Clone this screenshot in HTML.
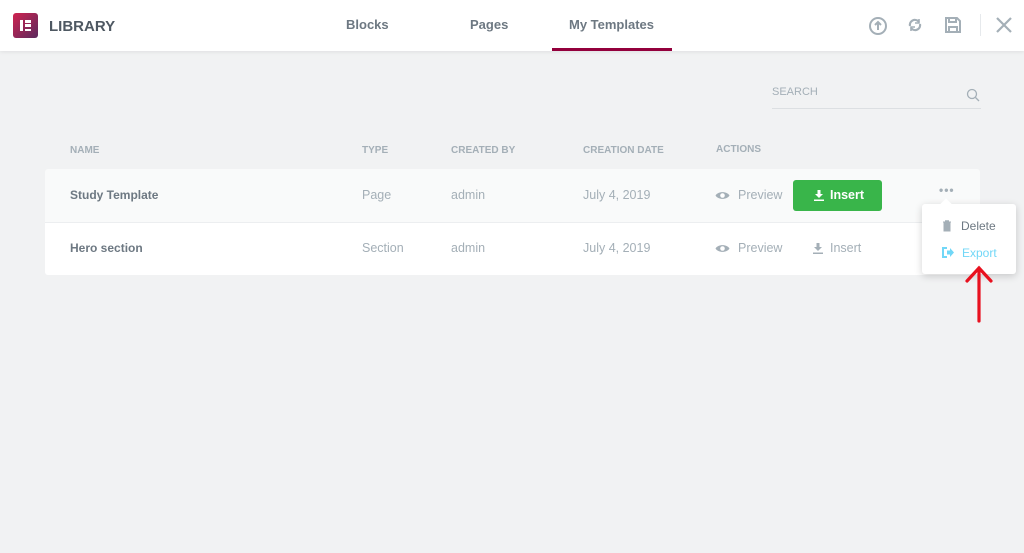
<!DOCTYPE html>
<html><head><style>
body{margin:0;width:1024px;height:553px;background:#f1f2f3;font-family:"Liberation Sans",sans-serif;position:relative;overflow:hidden}
.hdr{position:absolute;left:0;top:0;width:1024px;height:51px;background:#fff;box-shadow:0 1px 4px rgba(0,0,0,.08)}
.abs{position:absolute}
.tab{position:absolute;top:17px;font-size:13px;color:#6d7882;font-weight:bold}
.th{position:absolute;top:145px;font-size:10px;color:#a4afb7;font-weight:bold}
.c{position:absolute;font-size:12.5px;color:#a4afb7}
.n{position:absolute;font-size:12px;color:#6d7882;font-weight:bold}
</style></head><body>
<div class="hdr">
 <div class="abs" style="left:13px;top:13px;width:25px;height:25px;border-radius:3px;background:linear-gradient(135deg,#d0224f,#5a2a5e)"></div>
 <div class="abs" style="left:20px;top:20px;width:3px;height:11px;background:#fff"></div>
 <div class="abs" style="left:25px;top:20px;width:6px;height:2.5px;background:#fff"></div>
 <div class="abs" style="left:25px;top:24.3px;width:6px;height:2.5px;background:#fff"></div>
 <div class="abs" style="left:25px;top:28.5px;width:6px;height:2.5px;background:#fff"></div>
 <div class="abs" style="left:49px;top:18px;font-size:15px;font-weight:bold;color:#4e5862">LIBRARY</div>
 <div class="tab" style="left:346px">Blocks</div>
 <div class="tab" style="left:470px">Pages</div>
 <div class="tab" style="left:569px">My Templates</div>
 <div class="abs" style="left:552px;top:48px;width:120px;height:3px;background:#93003c"></div>
 <svg class="abs" style="left:866px;top:14px" width="24" height="24" viewBox="0 0 24 24" fill="none" stroke="#a4afb7" stroke-width="2"><circle cx="12" cy="12" r="8"/><path d="M12 16V8M9 11l3-3 3 3"/></svg>
 <svg class="abs" style="left:905px;top:15px" width="20" height="20" viewBox="0 0 20 20" fill="none" stroke="#a4afb7" stroke-width="2.2"><path d="M5 11a5 5 0 0 1 8-5l1 1M15 9a5 5 0 0 1-8 5l-1-1"/><path d="M14 4v4h-4M6 16v-4h4" stroke-width="1.6"/></svg>
 <svg class="abs" style="left:943px;top:15px" width="20" height="20" viewBox="0 0 20 20" fill="none" stroke="#a4afb7" stroke-width="2"><path d="M3 3h11l3 3v11H3z"/><path d="M6 3v4h7V3M6 17v-5h8v5"/></svg>
 <div class="abs" style="left:980px;top:14px;width:1px;height:22px;background:#e6e9ec"></div>
 <svg class="abs" style="left:994px;top:15px" width="20" height="20" viewBox="0 0 20 20" stroke="#a4afb7" stroke-width="2.2"><path d="M3 3l14 14M17 3L3 17"/></svg>
</div>
<div class="abs" style="left:772px;top:86px;font-size:11px;color:#a4afb7">SEARCH</div>
<svg class="abs" style="left:966px;top:88px" width="14" height="14" viewBox="0 0 14 14" fill="none" stroke="#a4afb7" stroke-width="1.3"><circle cx="6" cy="6" r="4.5"/><path d="M9.5 9.5L13 13"/></svg>
<div class="abs" style="left:772px;top:108px;width:209px;height:1px;background:#dcdfe2"></div>
<div class="th" style="left:70px">NAME</div>
<div class="th" style="left:362px">TYPE</div>
<div class="th" style="left:451px">CREATED BY</div>
<div class="th" style="left:583px">CREATION DATE</div>
<div class="th" style="left:716px;top:144px">ACTIONS</div>
<div class="abs" style="left:45px;top:169px;width:935px;height:53px;background:#f9fafa;border-radius:3px 3px 0 0"></div>
<div class="abs" style="left:45px;top:222px;width:935px;height:52px;background:#fff;border-top:1px solid #eceef0;border-radius:0 0 3px 3px"></div>
<div class="n" style="left:70px;top:188px">Study Template</div>
<div class="c" style="left:362px;top:188px">Page</div>
<div class="c" style="left:451px;top:188px">admin</div>
<div class="c" style="left:583px;top:188px">July 4, 2019</div>
<svg class="abs" style="left:715px;top:190px" width="15" height="11" viewBox="0 0 15 11"><path d="M0.5 5.5C3 1 12 1 14.5 5.5 12 10 3 10 0.5 5.5z" fill="#a4afb7"/><circle cx="7.5" cy="5.5" r="2.3" fill="#fff"/></svg>
<div class="c" style="left:738px;top:188px">Preview</div>
<div class="abs" style="left:793px;top:180px;width:89px;height:31px;background:#39b54a;border-radius:3px;color:#fff;font-size:12.5px;font-weight:bold;line-height:31px">
 <svg class="abs" style="left:21px;top:10px" width="10" height="11" viewBox="0 0 10 11"><path d="M3.5 0h3v4h2.5L5 8 1 4h2.5zM0 9.5h10V11H0z" fill="#fff"/></svg>
 <span style="position:absolute;left:37px">Insert</span></div>
<div class="abs" style="left:939px;top:183px;font-size:12px;color:#a4afb7;letter-spacing:1px;font-weight:bold">•••</div>
<div class="n" style="left:70px;top:241px">Hero section</div>
<div class="c" style="left:362px;top:241px">Section</div>
<div class="c" style="left:451px;top:241px">admin</div>
<div class="c" style="left:583px;top:241px">July 4, 2019</div>
<svg class="abs" style="left:715px;top:243px" width="15" height="11" viewBox="0 0 15 11"><path d="M0.5 5.5C3 1 12 1 14.5 5.5 12 10 3 10 0.5 5.5z" fill="#a4afb7"/><circle cx="7.5" cy="5.5" r="2.3" fill="#fff"/></svg>
<div class="c" style="left:738px;top:241px">Preview</div>
<svg class="abs" style="left:813px;top:243px" width="10" height="11" viewBox="0 0 10 11"><path d="M3.5 0h3v4h2.5L5 8 1 4h2.5zM0 9.5h10V11H0z" fill="#a4afb7"/></svg>
<div class="c" style="left:830px;top:241px">Insert</div>
<div class="abs" style="left:922px;top:204px;width:94px;height:70px;background:#fff;border-radius:3px;box-shadow:0 2px 8px rgba(0,0,0,.18)"></div>
<div class="abs" style="left:942px;top:200px;width:8px;height:8px;background:#fff;transform:rotate(45deg)"></div>
<svg class="abs" style="left:942px;top:220px" width="10" height="12" viewBox="0 0 10 12"><path d="M1 2h8M3.5 2V0.8h3V2M2 3h6v8H2z" fill="#a4afb7" stroke="#a4afb7"/></svg>
<div class="c" style="left:961px;top:219px;font-size:12px;color:#6d7882">Delete</div>
<svg class="abs" style="left:942px;top:247px" width="12" height="11" viewBox="0 0 12 11"><path d="M5 1H1v9h4" fill="none" stroke="#71d7f7" stroke-width="2"/><path d="M5 3.5h3V1l4 4.5L8 10V7.5H5z" fill="#71d7f7"/></svg>
<div class="c" style="left:962px;top:246px;font-size:12px;color:#71d7f7">Export</div>
<svg class="abs" style="left:962px;top:264px" width="34" height="60" viewBox="0 0 34 60" fill="none" stroke="#e8111f" stroke-width="3.2" stroke-linecap="round"><path d="M17 4V57M5 17L17 4 29 17"/></svg>
</body></html>
